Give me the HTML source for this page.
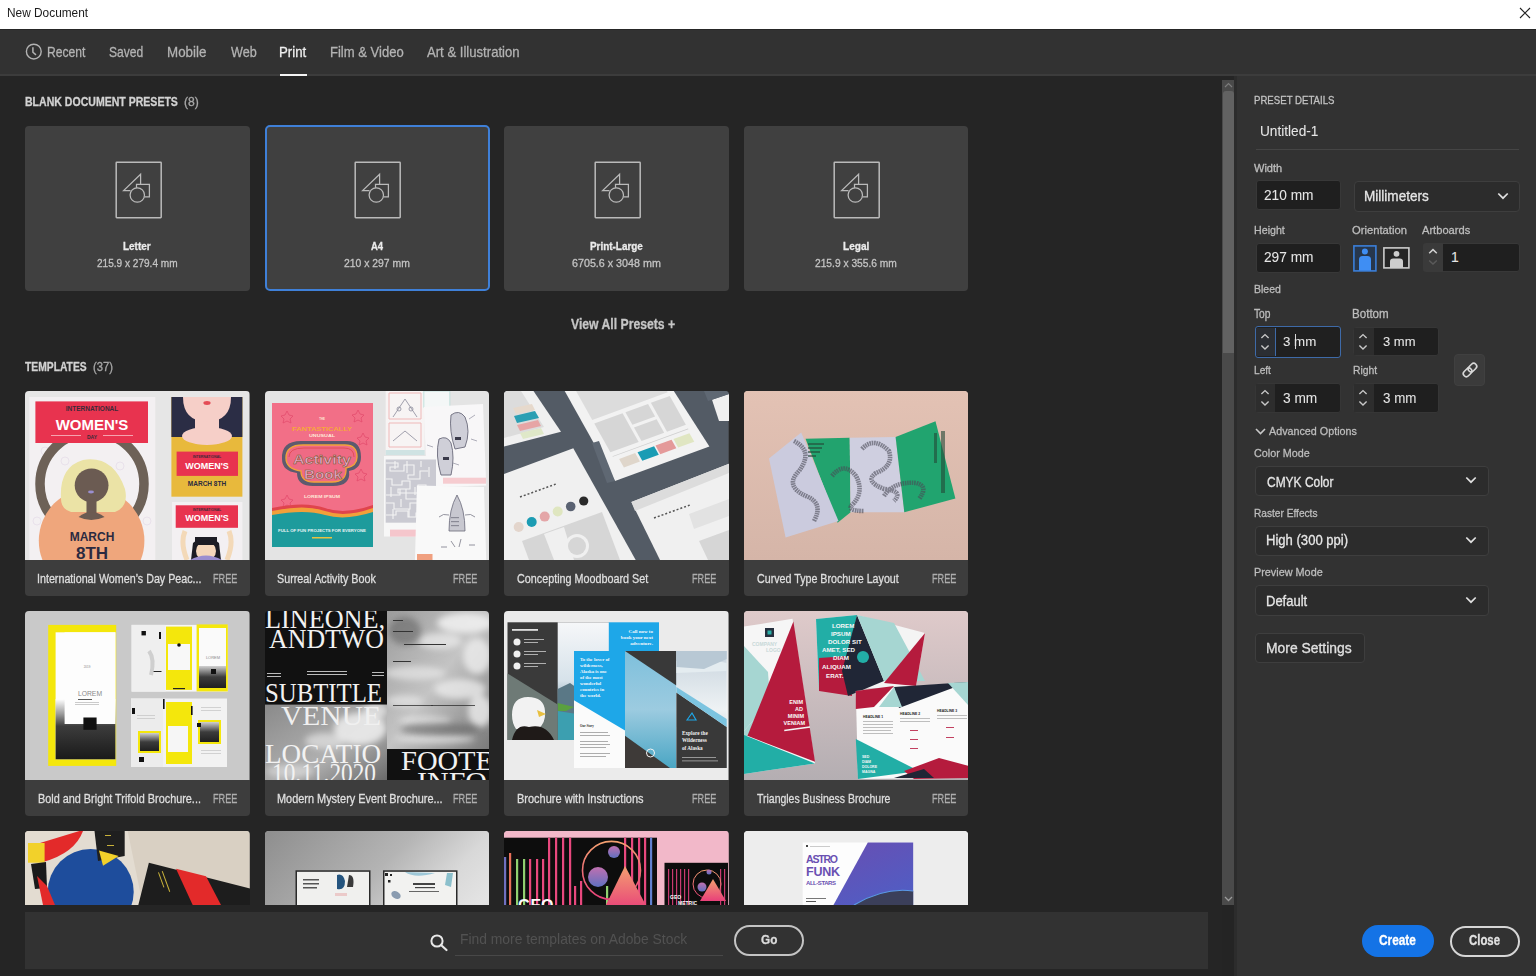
<!DOCTYPE html><html><head><meta charset="utf-8"><style>
*{box-sizing:border-box}
html,body{margin:0;padding:0}
body{width:1536px;height:976px;overflow:hidden;position:relative;background:#252525;font-family:"Liberation Sans",sans-serif}
.a{position:absolute}
.t{position:absolute;white-space:nowrap;line-height:1;transform-origin:0 0;font-family:"Liberation Sans",sans-serif}
.card{position:absolute;background:#404040;border-radius:4px}
.tc{position:absolute;background:#3d3d3d;border-radius:4px;overflow:hidden}
.img{position:absolute;left:0;top:0;width:100%;height:169px;overflow:hidden}
.in{position:absolute;background:#1f1f1f;border:1px solid #383838;border-radius:3px}
.dd{position:absolute;background:#2c2c2c;border:1px solid #3e3e3e;border-radius:4px}
.sp{position:absolute;background:#2e2e2e}
svg{display:block}
</style></head><body>

<div class="a" style="left:0;top:0;width:1536px;height:28.6px;background:#fff"></div>
<svg class="a" style="left:1519px;top:7px" width="12" height="12" viewBox="0 0 12 12"><path d="M1 1L11 11M11 1L1 11" stroke="#222" stroke-width="1.1"/></svg>
<div class="a" style="left:0;top:28.6px;width:1536px;height:46px;background:#323232"></div><div class="a" style="left:0;top:28.6px;width:1536px;height:1px;background:#262626"></div>
<div class="a" style="left:0;top:74.3px;width:1536px;height:2px;background:#3c3c3c"></div>
<div class="a" style="left:280px;top:73.5px;width:27px;height:2.5px;background:#f4f4f4"></div>
<svg class="a" style="left:25px;top:43px" width="18" height="18" viewBox="0 0 18 18"><circle cx="8.8" cy="8.6" r="7.4" fill="none" stroke="#b3b3b3" stroke-width="1.4"/><path d="M7.9 4.3V9.2L11 11.9" fill="none" stroke="#b3b3b3" stroke-width="1.5"/></svg>
<div class="a" style="left:1234px;top:76px;width:302px;height:900px;background:#323232"></div>
<div class="a" style="left:1234px;top:76px;width:3px;height:900px;background:#2c2c2c"></div>
<div class="a" style="left:1222px;top:80px;width:12px;height:825px;background:#4a4a4a"></div>
<div class="a" style="left:1223px;top:91px;width:10.5px;height:262px;background:#626262;border-radius:3px 3px 0 0"></div>
<svg class="a" style="left:1223px;top:81px" width="11" height="8" viewBox="0 0 11 8"><path d="M2 6L5.5 2.5L9 6" fill="none" stroke="#7c7c7c" stroke-width="1.2"/></svg>
<svg class="a" style="left:1223px;top:895px" width="11" height="8" viewBox="0 0 11 8"><path d="M2 2L5.5 5.5L9 2" fill="none" stroke="#9a9a9a" stroke-width="1.3"/></svg>
<div class="card" style="left:25px;top:125.5px;width:224.8px;height:165.5px"></div>
<svg class="a" style="left:114.5px;top:161px" width="48" height="58" viewBox="0 0 48 58"><rect x="1.2" y="1.2" width="45" height="55.5" rx="0.6" fill="none" stroke="#bababa" stroke-width="1.5"/><path d="M25.6 23.6V13.2L8.6 29.6H15.5" fill="none" stroke="#bababa" stroke-width="1.25" stroke-linejoin="miter"/><path d="M21.5 29V23.4H34.4V35.9H29.5" fill="none" stroke="#bababa" stroke-width="1.25"/><circle cx="22.3" cy="34" r="7.2" fill="#404040" stroke="#bababa" stroke-width="1.25"/></svg>
<div class="card" style="left:264.5px;top:125px;width:225.3px;height:166px;border:2.5px solid #3f80d8;border-radius:5px"></div>
<svg class="a" style="left:354.0px;top:161px" width="48" height="58" viewBox="0 0 48 58"><rect x="1.2" y="1.2" width="45" height="55.5" rx="0.6" fill="none" stroke="#bababa" stroke-width="1.5"/><path d="M25.6 23.6V13.2L8.6 29.6H15.5" fill="none" stroke="#bababa" stroke-width="1.25" stroke-linejoin="miter"/><path d="M21.5 29V23.4H34.4V35.9H29.5" fill="none" stroke="#bababa" stroke-width="1.25"/><circle cx="22.3" cy="34" r="7.2" fill="#404040" stroke="#bababa" stroke-width="1.25"/></svg>
<div class="card" style="left:504px;top:125.5px;width:224.8px;height:165.5px"></div>
<svg class="a" style="left:593.5px;top:161px" width="48" height="58" viewBox="0 0 48 58"><rect x="1.2" y="1.2" width="45" height="55.5" rx="0.6" fill="none" stroke="#bababa" stroke-width="1.5"/><path d="M25.6 23.6V13.2L8.6 29.6H15.5" fill="none" stroke="#bababa" stroke-width="1.25" stroke-linejoin="miter"/><path d="M21.5 29V23.4H34.4V35.9H29.5" fill="none" stroke="#bababa" stroke-width="1.25"/><circle cx="22.3" cy="34" r="7.2" fill="#404040" stroke="#bababa" stroke-width="1.25"/></svg>
<div class="card" style="left:743.5px;top:125.5px;width:224.8px;height:165.5px"></div>
<svg class="a" style="left:833.0px;top:161px" width="48" height="58" viewBox="0 0 48 58"><rect x="1.2" y="1.2" width="45" height="55.5" rx="0.6" fill="none" stroke="#bababa" stroke-width="1.5"/><path d="M25.6 23.6V13.2L8.6 29.6H15.5" fill="none" stroke="#bababa" stroke-width="1.25" stroke-linejoin="miter"/><path d="M21.5 29V23.4H34.4V35.9H29.5" fill="none" stroke="#bababa" stroke-width="1.25"/><circle cx="22.3" cy="34" r="7.2" fill="#404040" stroke="#bababa" stroke-width="1.25"/></svg>
<div class="tc" style="left:25px;top:391px;width:224.8px;height:204.5px">
<div class="img"><svg width="224.5" height="169" viewBox="0 0 224.5 169"><rect width="224.5" height="169" fill="#e6e6e6"/>
<rect x="4.3" y="6" width="126" height="163" fill="#f3f0f2"/>
<g fill="none" stroke="#e6dde8" stroke-width="0.8">
<circle cx="20" cy="60" r="4"/><circle cx="40" cy="70" r="4"/><circle cx="110" cy="62" r="4"/><circle cx="95" cy="75" r="4"/>
<circle cx="15" cy="90" r="4"/><circle cx="118" cy="95" r="4"/><circle cx="12" cy="130" r="4"/><circle cx="122" cy="130" r="4"/>
</g>
<circle cx="67" cy="93" r="52" fill="none" stroke="#6d6157" stroke-width="9.5"/>
<circle cx="66.6" cy="149.7" r="52.8" fill="#efa67c"/>
<path d="M36 108 Q34 76 58 69 Q88 64 100 98 Q104 116 90 121 L46 121 Q36 118 36 108Z" fill="#ebe3a6"/>
<circle cx="66.6" cy="94.3" r="16.9" fill="#6b5b52"/>
<rect x="61.5" y="106" width="10" height="16" fill="#6b5b52"/>
<path d="M53.6 126 Q66 116 79.6 126 Q66 132 53.6 126Z" fill="#6b5b52"/>
<ellipse cx="66" cy="101" rx="3" ry="1.4" fill="#9a8fd0"/>
<rect x="10.4" y="10.4" width="112.6" height="41.6" fill="#e8334f"/>
<text x="67" y="20" text-anchor="middle" font-size="6.5" fill="#3b2a38" font-family="Liberation Sans" font-weight="bold">INTERNATIONAL</text>
<text x="67" y="38.5" text-anchor="middle" font-size="15" fill="#ffffff" font-family="Liberation Sans" font-weight="bold">WOMEN'S</text>
<text x="67" y="48" text-anchor="middle" font-size="5" fill="#3b2a38" font-family="Liberation Sans" font-weight="bold">DAY</text>
<path d="M26 44.5H56M78 44.5H108" stroke="#f7c0c8" stroke-width="0.8"/>
<text x="67" y="150" text-anchor="middle" font-size="12" fill="#2b2a40" font-family="Liberation Sans" font-weight="bold">MARCH</text>
<text x="67" y="168" text-anchor="middle" font-size="17" fill="#2b2a40" font-family="Liberation Sans" font-weight="bold">8TH</text>
<rect x="146.4" y="6" width="71" height="99.7" fill="#e8b93c"/>
<rect x="146.4" y="6" width="71" height="40" fill="#2b2d45"/>
<ellipse cx="182" cy="45" rx="25" ry="9" fill="#f6cfc8"/><path d="M170 20 H194 V42 H170Z" fill="#f6cfc8"/><path d="M158 6 H206 Q206 30 182 31 Q158 30 158 6Z" fill="#f6cfc8"/>
<rect x="146.4" y="0" width="71" height="6" fill="#e6e6e6"/>
<ellipse cx="182" cy="12" rx="3.6" ry="1.9" fill="#e44b55"/>
<rect x="151.6" y="60.6" width="61.4" height="24.3" fill="#e8334f"/>
<text x="182" y="66.5" text-anchor="middle" font-size="3.5" fill="#3b2a38" font-family="Liberation Sans" font-weight="bold">INTERNATIONAL</text>
<text x="182" y="77.5" text-anchor="middle" font-size="9" fill="#ffffff" font-family="Liberation Sans" font-weight="bold">WOMEN'S</text>
<text x="182" y="94.5" text-anchor="middle" font-size="6.5" fill="#2b2a40" font-family="Liberation Sans" font-weight="bold">MARCH 8TH</text>
<rect x="147" y="111" width="70.4" height="58" fill="#f3f0f2"/>
<rect x="150.7" y="114.3" width="62.3" height="22.5" fill="#e8334f"/>
<text x="182" y="119.5" text-anchor="middle" font-size="3.5" fill="#3b2a38" font-family="Liberation Sans" font-weight="bold">INTERNATIONAL</text>
<text x="182" y="130" text-anchor="middle" font-size="9" fill="#ffffff" font-family="Liberation Sans" font-weight="bold">WOMEN'S</text>
<path d="M160 140 Q155 152 162 169M204 140 Q209 152 202 169" fill="none" stroke="#f3d9b8" stroke-width="5"/>
<path d="M166 169 L168 152 Q181 140 194 152 L196 169Z" fill="#1c1c24"/>
<ellipse cx="181" cy="160" rx="10" ry="10" fill="#f5d7bb"/>
<rect x="170" y="146" width="22" height="8" fill="#1c1c24"/>
<path d="M165 169 Q181 160 197 169Z" fill="#9b8ed0"/>
</svg></div>
</div>
<div class="tc" style="left:264.5px;top:391px;width:224.8px;height:204.5px">
<div class="img"><svg width="224.5" height="169" viewBox="0 0 224.5 169"><rect width="224.5" height="169" fill="#e4e4e4"/>
<rect x="7" y="12" width="101" height="144" fill="#f26f87"/>
<g fill="none" stroke="#e34c6d" stroke-width="0.8">
<path d="M22 20l2 4 4 1-3 3 1 4-4-2-4 2 1-4-3-3 4-1z"/><path d="M93 19l2 4 4 1-3 3 1 4-4-2-4 2 1-4-3-3 4-1z"/>
<path d="M98 42l2 4 4 1-3 3 1 4-4-2-4 2 1-4-3-3 4-1z"/><path d="M22 104l2 4 4 1-3 3 1 4-4-2-4 2 1-4-3-3 4-1z"/>
<path d="M96 78l2 4 4 1-3 3 1 4-4-2-4 2 1-4-3-3 4-1z"/>
</g>
<text x="57" y="29" text-anchor="middle" font-size="2.8" fill="#ffe9d8" font-family="Liberation Sans" font-weight="bold">THE</text>
<text x="57" y="40" text-anchor="middle" font-size="5.5" fill="#f7a83a" textLength="60" lengthAdjust="spacingAndGlyphs" font-family="Liberation Sans" font-weight="bold">FANTASTICALLY</text>
<text x="57" y="45.5" text-anchor="middle" font-size="2.8" fill="#ffe9d8" textLength="26" lengthAdjust="spacingAndGlyphs" font-family="Liberation Sans" font-weight="bold">UNUSUAL</text>
<path d="M17 68 Q16 50 36 50 L82 50 Q96 50 96 66 Q96 78 84 80 Q86 95 68 95 L48 95 Q32 95 32 82 Q17 80 17 68Z" fill="#5d5a6e"/>
<path d="M21 67 Q21 54 38 54 L80 54 Q92 54 92 66 Q92 75 81 77 Q82 91 67 91 L49 91 Q36 91 36 80 Q21 78 21 67Z" fill="#ef6a84" stroke="#f2a23a" stroke-width="1.4"/>
<path d="M24 66 Q24 57 39 57 L79 57 Q89 57 89 66" fill="none" stroke="#e04a50" stroke-width="0.9"/>
<text x="57" y="73" text-anchor="middle" font-size="13" fill="#e9a6cf" stroke="#7a5a2a" stroke-width="0.5" textLength="58" lengthAdjust="spacingAndGlyphs" font-family="Liberation Sans" font-weight="bold">Activity</text>
<text x="58" y="88" text-anchor="middle" font-size="13" fill="#e9a6cf" stroke="#7a5a2a" stroke-width="0.5" textLength="38" lengthAdjust="spacingAndGlyphs" font-family="Liberation Sans" font-weight="bold">Book</text>
<text x="57" y="107" text-anchor="middle" font-size="3.4" fill="#ffe9d8" textLength="36" lengthAdjust="spacingAndGlyphs" font-family="Liberation Sans" font-weight="bold">LOREM IPSUM</text>
<path d="M7 117 Q40 110 60 117 T108 114 V156 H7Z" fill="#e0444c"/>
<path d="M7 120 Q40 113 60 120 T108 117 V156 H7Z" fill="#f2a03a"/>
<path d="M7 124 Q40 118 60 124 T108 121 V156 H7Z" fill="#1d9b9c"/>
<text x="57" y="141" text-anchor="middle" font-size="2.8" fill="#e8f4f4" textLength="88" lengthAdjust="spacingAndGlyphs" font-family="Liberation Sans" font-weight="bold">FULL OF FUN PROJECTS FOR EVERYONE</text>
<rect x="47" y="146" width="20" height="1.5" fill="#e9c240"/>
<path d="M120.7 0H159.7V64H120.7Z" fill="#f7f4f4"/>
<path d="M120.7 59H159.7V64H120.7Z" fill="#cfe3e3"/>
<g fill="none" stroke="#efb8b8" stroke-width="1"><path d="M124 2H156V28H124Z M124 32H156V56H124Z"/></g>
<g fill="none" stroke="#8a8a9a" stroke-width="0.8"><path d="M128 26 L140 8 L152 26 M128 50 L140 40 L152 50"/><circle cx="134" cy="18" r="2"/><circle cx="146" cy="18" r="2"/></g>
<path d="M158.8 0H184.8V16.5H158.8Z" fill="#f4f7f7" stroke="#b8dcd8" stroke-width="0.8"/>
<path d="M158.8 16 L218 13 L221.2 94.5 L162 96Z" fill="#f8f7f8"/>
<rect x="178" y="86.7" width="43" height="6" fill="#f6ccd0"/>
<g fill="#cfcfd8" stroke="#6a6a7a" stroke-width="0.9">
<path d="M186 24 Q194 18 200 26 Q206 40 200 56 L190 58 Q184 40 186 24Z"/>
<path d="M174 48 Q182 44 186 52 Q190 66 186 84 L176 84 Q170 64 174 48Z"/>
</g>
<g fill="#3a3a4a"><rect x="190" y="46" width="6" height="3"/><rect x="178" y="66" width="6" height="3"/></g>
<g fill="none" stroke="#9a9aa8" stroke-width="0.8"><path d="M204 28 l6 -4 M206 48 l6 2 M168 56 l-6 -2 M188 72 l6 2"/></g>
<path d="M119 65 H171.8 V145.6 H119Z" fill="#f7f7f7"/>
<rect x="120.7" y="68.5" width="50.3" height="63.2" fill="#cacad2"/>
<g stroke="#f4f4f4" stroke-width="1.1" fill="none">
<path d="M121 72h12v4h-8v4h14v-6h10v10h-6v4h12v-8h8M121 88h6v6h10v-4h8v8h-12v4h20v-8h8v6M121 104h14v-6h6v10h12v-6h10v10M121 112h8v6h16v-6h8v8h14M121 124h10v-4h12v6h8v-4h10v6h8"/>
<path d="M130 70v8M142 70v12M156 70v6M164 76v10M126 96v10M150 96v8M136 108v8M160 108v12M144 118v8M128 118v10"/>
</g>
<rect x="125" y="138.6" width="32" height="7" fill="#f5c6cc"/>
<path d="M151.9 94.5 L219 96 L221.2 169 L150 169Z" fill="#f9f9f9"/>
<rect x="152" y="163" width="15.5" height="6" fill="#f0a080"/>
<g fill="#c8c8d0" stroke="#6a6a7a" stroke-width="0.8">
<path d="M192 104 Q184 118 184 140 L200 140 Q200 118 192 104Z"/>
</g>
<g fill="none" stroke="#7a7a88" stroke-width="0.8"><path d="M184 124 q-6 -2 -10 2 M200 124 q6 -2 10 2"/><path d="M186 150 l4 6 M196 148 l-2 8 M176 156 h6 M204 154 h6"/></g>
<g fill="#8a8a96"><rect x="186" y="126" width="8" height="1.2"/><rect x="186" y="130" width="8" height="1.2"/><rect x="186" y="134" width="8" height="1.2"/></g>
</svg></div>
</div>
<div class="tc" style="left:504px;top:391px;width:224.8px;height:204.5px">
<div class="img"><svg width="224.5" height="169" viewBox="0 0 224.5 169"><rect width="224.5" height="169" fill="#535b65"/>
<polygon points="0,0 29.5,0 57,40.7 0,55.5" fill="#f0f0f0"/>
<polygon points="0,0 17,0 40,36 0,47" fill="#dcdcdc"/>
<polygon points="9,17 28,13 31,19 12,23" fill="#e6d9cc"/>
<polygon points="10,25 31,20 35,27 13,32" fill="#2a9fb3"/>
<polygon points="13,34 34,29 37,35 16,40" fill="#e6a5a5"/>
<polygon points="16,42 37,37 40,43 19,48" fill="#dfe8c8"/>
<polygon points="60.7,0 169.8,0 205.4,55.5 111,90" fill="#f2f2f2"/>
<polygon points="95,50 111,90 103,92 88,52" fill="#5f6873"/>
<g transform="matrix(0.944,-0.345,-0.503,-0.9,111,90)">
<rect x="10" y="64" width="80" height="40" fill="#dcdcdc"/>
<rect x="10" y="28" width="30" height="32" fill="#d6d6d6"/>
<rect x="43" y="46" width="24" height="14" fill="#d6d6d6"/>
<rect x="43" y="28" width="24" height="15" fill="#d6d6d6"/>
<rect x="70" y="28" width="20" height="32" fill="#d6d6d6"/>
<rect x="10" y="23" width="80" height="0.8" fill="#cfcfcf"/>
<rect x="14.5" y="9.5" width="17" height="9.5" fill="#dfd6cb"/>
<rect x="34" y="9.5" width="17.5" height="9.5" fill="#1a9cb4"/>
<rect x="53" y="9.5" width="17" height="9.5" fill="#e49a9a"/>
<rect x="72" y="9.5" width="17" height="9.5" fill="#e0e6c2"/>
</g>
<polygon points="0,83 69.3,57.2 131.7,169 0,169" fill="#f0f0f0"/>
<circle cx="14.7" cy="136" r="5" fill="#e3d5cc"/>
<circle cx="27.7" cy="131" r="5" fill="#1c9cb3"/>
<circle cx="40.7" cy="125.6" r="5" fill="#e4a6a8"/>
<circle cx="53.7" cy="120.5" r="5" fill="#dfe6c0"/>
<circle cx="66.7" cy="115.5" r="4.8" fill="#5a6272"/>
<circle cx="79.7" cy="110" r="4.6" fill="#2a2a2a"/>
<path d="M16 106 L52 93" stroke="#555" stroke-width="1.5" stroke-dasharray="2 2"/>
<polygon points="18,150 98,121 116,169 25,169" fill="#d6d6d6"/>
<polygon points="40,143 60,136 70,169 50,169" fill="#f0f0f0"/>
<circle cx="73" cy="155" r="12" fill="#f0f0f0"/>
<circle cx="73" cy="155" r="9" fill="#d6d6d6"/>
<polygon points="127.4,111 225,72.8 225,169 156,169" fill="#f0f0f0"/>
<polygon points="127.4,111 225,72.8 225,82 131,120" fill="#dcdcdc"/>
<path d="M150 127 L186 114" stroke="#555" stroke-width="1.5" stroke-dasharray="2 2"/>
<polygon points="185,123 225,108 225,125 190,138" fill="#e2e2e2"/>
<polygon points="195,150 225,139 225,169 204,169" fill="#d6d6d6"/>
<polygon points="208,8.7 225,3 225,30 215,30" fill="#f0f0f0"/>
<polygon points="200,0 225,0 225,3 208,8.7 204,10" fill="#5f6873"/>
</svg></div>
</div>
<div class="tc" style="left:743.5px;top:391px;width:224.8px;height:204.5px">
<div class="img"><svg width="224.5" height="169" viewBox="0 0 224.5 169"><rect width="224.5" height="169" fill="#dfbeb0"/>
<defs><linearGradient id="cg" x1="0" y1="0" x2="0" y2="1"><stop offset="0" stop-color="#e3c2b4"/><stop offset="1" stop-color="#d5b5a8"/></linearGradient></defs>
<rect width="224.5" height="169" fill="url(#cg)"/>

<polygon points="61.5,47.7 105.7,46.8 106.6,121.3 93.6,131.7" fill="#22a36e"/>
<polygon points="25,67.6 57.2,41.6 94.5,130 41.6,146.4" fill="#cbcbde"/>

<polygon points="105.7,46.8 151.6,46 160.3,121.3 106.6,121.3" fill="#cfcfe0"/>
<polygon points="151.6,46 191.5,30.3 211.4,107.4 160.3,121.3" fill="#21a46f"/>
<g fill="none" stroke="#4a4a56" stroke-width="4.6" stroke-dasharray="1.6 0.7" opacity="0.6">
<path d="M50 50 Q70 60 55 80 Q40 95 62 105 Q80 112 70 130"/>
<path d="M88 85 Q100 70 112 85 Q120 100 110 112 Q100 120 120 120"/>
<path d="M118 58 Q130 45 145 60 Q150 75 132 82 Q120 90 140 98 Q160 100 150 110"/>
<path d="M140 105 Q150 90 172 92 Q185 95 175 108"/>
</g>
<g fill="#244a38" opacity="0.6"><rect x="64" y="52" width="16" height="2"/><rect x="64" y="56" width="14" height="2"/><rect x="64" y="60" width="12" height="2"/><rect x="64" y="64" width="8" height="2"/>
<rect x="197" y="40" width="4" height="62"/><rect x="190" y="42" width="3" height="30"/></g>
</svg></div>
</div>
<div class="tc" style="left:25px;top:611px;width:224.8px;height:204.5px">
<div class="img"><svg width="224.5" height="169" viewBox="0 0 224.5 169"><rect width="224.5" height="169" fill="#c9c9c9"/>
<defs>
<linearGradient id="fg" x1="0" y1="0" x2="0" y2="1"><stop offset="0" stop-color="#ffffff"/><stop offset="0.25" stop-color="#9a9a9a"/><stop offset="0.45" stop-color="#3c3c3c"/><stop offset="1" stop-color="#1a1a1a"/></linearGradient>
<linearGradient id="fg2" x1="0" y1="0" x2="0" y2="1"><stop offset="0" stop-color="#d0d0d0"/><stop offset="0.5" stop-color="#3c3c3c"/><stop offset="1" stop-color="#202020"/></linearGradient>
</defs>
<rect x="23.2" y="13.9" width="68" height="141" fill="#f4e70c"/>
<rect x="30.6" y="21.3" width="59.8" height="127" fill="#fdfdfd"/>
<rect x="30.6" y="88" width="59.8" height="60.3" fill="url(#fg)"/>
<rect x="39.6" y="21.3" width="50.8" height="91.7" fill="#fdfdfd"/>
<rect x="58.4" y="106.5" width="13.2" height="12.3" fill="#111"/>
<text x="65" y="85" text-anchor="middle" font-size="8" fill="#8a8a8a" font-family="Liberation Sans" textLength="24" lengthAdjust="spacingAndGlyphs">LOREM</text>
<rect x="53" y="88" width="14" height="0.9" fill="#444"/>
<rect x="50" y="91" width="24" height="0.6" fill="#aaa"/><rect x="50" y="93" width="24" height="0.6" fill="#aaa"/>
<text x="62" y="57" text-anchor="middle" font-size="3" fill="#888" font-family="Liberation Sans">2019</text>
<rect x="106.6" y="13.9" width="96.2" height="66.7" fill="#f6f6f6"/>
<rect x="106.6" y="13.9" width="34" height="66.7" fill="#efefef"/>
<rect x="141" y="15.6" width="26" height="63.3" fill="#f4e70c"/>
<rect x="143" y="33" width="22" height="26" fill="#f8f8f8"/>
<circle cx="154" cy="34" r="1.8" fill="#111"/>
<rect x="116.5" y="20" width="4.4" height="4.4" fill="#111"/>
<rect x="134" y="21" width="2" height="7" fill="#111"/>
<rect x="127.5" y="60" width="9" height="1" fill="#222"/>
<rect x="148" y="77" width="12" height="1.2" fill="#222"/>
<path d="M124 40 q6 8 2 24" stroke="#cfcfcf" stroke-width="4" fill="none"/>
<rect x="171.6" y="13.4" width="31.2" height="67" fill="#f4e70c"/>
<rect x="174" y="17" width="27" height="60" fill="#fafafa"/>
<rect x="174" y="55" width="27" height="22" fill="url(#fg2)"/>
<rect x="186" y="58" width="5" height="5" fill="#111"/>
<text x="188" y="48" text-anchor="middle" font-size="4" fill="#8a8a8a" font-family="Liberation Sans">LOREM</text>
<rect x="106" y="87.5" width="96" height="68.5" fill="#f2f2f2"/>
<rect x="106" y="87.5" width="32" height="68.5" fill="#ececec"/>
<rect x="141" y="91" width="26" height="62" fill="#f4e70c"/>
<rect x="143" y="115" width="20" height="26" fill="#f6f6f6"/>
<rect x="113" y="120" width="23" height="22" fill="#f4e70c"/>
<rect x="115" y="122" width="19" height="18" fill="url(#fg2)"/>
<rect x="173" y="109" width="23" height="24" fill="#f4e70c"/>
<rect x="175" y="111" width="19" height="20" fill="url(#fg2)"/>
<rect x="107" y="97" width="3" height="6" fill="#111"/>
<rect x="138" y="88" width="1.6" height="10" fill="#111"/>
<rect x="114" y="146" width="5" height="5" fill="#111"/>
<rect x="172" y="112" width="4" height="4" fill="#111"/>
<rect x="166" y="95" width="1.6" height="9" fill="#111"/>
<g fill="#c8c8c8"><rect x="112" y="104" width="18" height="0.8"/><rect x="112" y="107" width="18" height="0.8"/><rect x="176" y="139" width="20" height="0.8"/><rect x="176" y="142" width="20" height="0.8"/><rect x="176" y="96" width="20" height="0.8"/><rect x="176" y="99" width="20" height="0.8"/></g>
</svg></div>
</div>
<div class="tc" style="left:264.5px;top:611px;width:224.8px;height:204.5px">
<div class="img"><svg width="224.5" height="169" viewBox="0 0 224.5 169"><rect width="224.5" height="169" fill="#111111"/>
<defs>
<linearGradient id="cl1" x1="0" y1="0" x2="1" y2="1"><stop offset="0" stop-color="#9c9c9c"/><stop offset="0.5" stop-color="#c4c4c4"/><stop offset="1" stop-color="#7a7a7a"/></linearGradient>
<linearGradient id="cl2" x1="0" y1="0" x2="1" y2="1"><stop offset="0" stop-color="#8a8a8a"/><stop offset="0.6" stop-color="#b0b0b0"/><stop offset="1" stop-color="#6a6a6a"/></linearGradient>
</defs>
<rect x="0" y="0" width="122" height="93.6" fill="#111111"/>
<filter id="bl" x="-50%" y="-50%" width="200%" height="200%"><feGaussianBlur stdDeviation="3"/></filter><clipPath id="mcr"><rect x="122" y="0" width="102.5" height="138"/></clipPath><clipPath id="mcl"><rect x="0" y="93.6" width="122" height="75.4"/></clipPath>
<rect x="122" y="0" width="102.5" height="138" fill="url(#cl1)"/>
<g clip-path="url(#mcr)"><g filter="url(#bl)" fill="#eeeeee">
<ellipse cx="200" cy="12" rx="28" ry="10" opacity="0.9"/>
<ellipse cx="175" cy="30" rx="22" ry="8" opacity="0.7"/>
<ellipse cx="212" cy="45" rx="14" ry="18" opacity="0.8"/>
<ellipse cx="150" cy="62" rx="30" ry="7" opacity="0.6"/>
<ellipse cx="195" cy="78" rx="26" ry="10" opacity="0.75"/>
<ellipse cx="140" cy="90" rx="18" ry="6" opacity="0.6"/>
<ellipse cx="215" cy="100" rx="12" ry="16" opacity="0.8"/>
<ellipse cx="160" cy="110" rx="26" ry="5" opacity="0.6"/>
<ellipse cx="170" cy="128" rx="40" ry="4" opacity="0.7"/>
</g>
<g filter="url(#bl)" fill="#5a5a5a" opacity="0.5">
<ellipse cx="140" cy="20" rx="16" ry="14"/>
<ellipse cx="175" cy="118" rx="40" ry="6"/>
</g></g>
<rect x="0" y="93.6" width="122" height="75.4" fill="url(#cl2)"/>
<g clip-path="url(#mcl)"><g filter="url(#bl)" fill="#eeeeee">
<ellipse cx="95" cy="118" rx="26" ry="16" opacity="0.85"/>
<ellipse cx="60" cy="130" rx="20" ry="8" opacity="0.6"/>
<ellipse cx="110" cy="100" rx="12" ry="8" opacity="0.7"/>
<ellipse cx="25" cy="160" rx="24" ry="7" opacity="0.5"/>
</g></g>
<rect x="122" y="138" width="102.5" height="31" fill="#111111"/>
<g font-family="Liberation Serif" fill="#f2f2f2" lengthAdjust="spacingAndGlyphs">
<text x="0" y="16.5" font-size="27" textLength="120" lengthAdjust="spacingAndGlyphs">LINEONE,</text>
<text x="4" y="37.3" font-size="27" textLength="115" lengthAdjust="spacingAndGlyphs">ANDTWO</text>
<text x="0" y="91" font-size="27" textLength="117" lengthAdjust="spacingAndGlyphs">SUBTITLE</text>
<text x="16" y="114.4" font-size="27" textLength="100" lengthAdjust="spacingAndGlyphs" fill="#f0f0f0">VENUE</text>
<text x="0" y="151.6" font-size="27" textLength="116" lengthAdjust="spacingAndGlyphs">LOCATIO</text>
<text x="7" y="171" font-size="27" textLength="104" lengthAdjust="spacingAndGlyphs">10.11.2020</text>
<text x="136" y="158.6" font-size="27" textLength="92" lengthAdjust="spacingAndGlyphs">FOOTE</text>
<text x="152" y="180" font-size="27" textLength="70" lengthAdjust="spacingAndGlyphs">INFO</text>
</g>
<g fill="#bbb"><rect x="2" y="62" width="14" height="1"/><rect x="2" y="65" width="14" height="1"/><rect x="42" y="60" width="40" height="1"/><rect x="42" y="63" width="40" height="1"/><rect x="107" y="61" width="12" height="1"/><rect x="107" y="64" width="12" height="1"/></g>
<g fill="#333"><rect x="128" y="9" width="10" height="1"/><rect x="128" y="20" width="20" height="1"/><rect x="139" y="33" width="42" height="1"/><rect x="128" y="50" width="18" height="1"/><rect x="128" y="94" width="40" height="0.8"/><rect x="166" y="94" width="44" height="0.8"/></g>
</svg></div>
</div>
<div class="tc" style="left:504px;top:611px;width:224.8px;height:204.5px">
<div class="img"><svg width="224.5" height="169" viewBox="0 0 224.5 169"><rect width="224.5" height="169" fill="#ebebeb"/>
<defs>
<linearGradient id="sky" x1="0" y1="0" x2="0" y2="1"><stop offset="0" stop-color="#f6f7f9"/><stop offset="0.5" stop-color="#d6e2ea"/><stop offset="0.7" stop-color="#8aa4b2"/><stop offset="1" stop-color="#3aa0b2"/></linearGradient>
<linearGradient id="ice" x1="0" y1="0" x2="0" y2="1"><stop offset="0" stop-color="#7ec0dc"/><stop offset="0.5" stop-color="#9ccbe0"/><stop offset="1" stop-color="#4aa6c4"/></linearGradient>
<linearGradient id="gl" x1="0" y1="0" x2="0" y2="1"><stop offset="0" stop-color="#c8d4de"/><stop offset="0.5" stop-color="#eef2f4"/><stop offset="1" stop-color="#a8b8c2"/></linearGradient>
</defs>
<rect x="3.5" y="11.3" width="101.5" height="117.7" fill="#3a3a3a"/>
<rect x="53.7" y="11.3" width="51.3" height="117.7" fill="url(#sky)"/>
<polygon points="53.7,78 66,72 80,82 105,88 105,105 53.7,105" fill="#5a7886"/>
<polygon points="53.7,100 105,108 105,129 53.7,129" fill="#3c9fb0"/><polygon points="53.7,92 70,96 62,100 53.7,100" fill="#5aa040"/>
<polygon points="3.5,62.4 53.7,93.6 53.7,129 3.5,129" fill="#6e7a76"/>
<path d="M8 104 Q8 86 24 86 Q40 86 41 100 Q42 112 34 118 L12 118 Q8 112 8 104Z" fill="#f2f2f2"/>
<path d="M8 129 Q12 112 25 116 Q42 112 50 129Z" fill="#1f1a18"/>
<path d="M33 99 L42 103 L35 106Z" fill="#e8c040"/>
<circle cx="13" cy="31" r="3.5" fill="#f0f0f0"/><circle cx="13" cy="43" r="3.5" fill="#f0f0f0"/><circle cx="13" cy="55" r="3.5" fill="#f0f0f0"/>
<rect x="8" y="18" width="26" height="1.8" fill="#e0e0e0"/>
<g fill="#bdbdbd"><rect x="20" y="28" width="20" height="0.9"/><rect x="20" y="31" width="14" height="0.9"/><rect x="20" y="40" width="22" height="0.9"/><rect x="20" y="43" width="14" height="0.9"/><rect x="20" y="52" width="22" height="0.9"/><rect x="20" y="55" width="14" height="0.9"/></g>
<rect x="104.8" y="11.3" width="50.2" height="40" fill="#1ea7e8"/>
<g fill="#f4f8fc" font-family="Liberation Serif" font-weight="bold" font-size="5" text-anchor="end"><text x="149" y="22">Call now to</text><text x="149" y="28">book your next</text><text x="149" y="34">adventure.</text></g>
<rect x="70" y="40" width="152.7" height="117" fill="#fbfbfb"/>
<polygon points="70,40 121,40 121,119.6 70,89.2" fill="#1ea7e8"/>
<g fill="#f4f8fc" font-family="Liberation Serif" font-weight="bold" font-size="4.8"><text x="76" y="50">To the lover of</text><text x="76" y="56">wilderness,</text><text x="76" y="62">Alaska is one</text><text x="76" y="68">of the most</text><text x="76" y="74">wonderful</text><text x="76" y="80">countries in</text><text x="76" y="86">the world.</text></g>
<text x="76" y="116" font-size="3.2" fill="#333" font-family="Liberation Serif" font-weight="bold">Our Story</text>
<g fill="#9a9a9a"><rect x="76" y="121" width="28" height="0.8"/><rect x="76" y="124" width="30" height="0.8"/><rect x="76" y="130" width="28" height="0.8"/><rect x="76" y="133" width="30" height="0.8"/><rect x="76" y="136" width="26" height="0.8"/><rect x="76" y="142" width="30" height="0.8"/><rect x="76" y="145" width="26" height="0.8"/></g>
<rect x="121" y="40" width="51.4" height="117" fill="url(#ice)"/>
<polygon points="121,40 172.4,40 172.4,74.5" fill="#393939"/>
<polygon points="121,124.8 121,157 166,157" fill="#3e3a38"/>
<circle cx="146.5" cy="142" r="4" fill="none" stroke="#f4f4f4" stroke-width="1"/>
<rect x="172.4" y="40" width="50.3" height="117" fill="url(#gl)"/>
<polygon points="172.4,50 190,45 222.7,52 222.7,60 172.4,62" fill="#e4ecf0"/>
<polygon points="172.4,40 222.7,40 222.7,48 200,58 172.4,56" fill="#b8c8d4"/>
<polygon points="172.4,81.5 222.7,116 222.7,157 172.4,157" fill="#393939"/>
<polygon points="172.4,76 222.7,108 222.7,116 172.4,81.5" fill="#7cc4e0"/>
<path d="M183 109 L188 102 L192 109Z" fill="none" stroke="#1ea7e8" stroke-width="1.2"/>
<g fill="#f2f2f2" font-family="Liberation Serif" font-weight="bold" font-size="5.2"><text x="178" y="124">Explore the</text><text x="178" y="131">Wilderness</text><text x="178" y="138.5">of Alaska</text></g>
<g fill="#b0b0b0"><rect x="178" y="146" width="34" height="0.8"/><rect x="178" y="149.5" width="36" height="0.8"/></g>
</svg></div>
</div>
<div class="tc" style="left:743.5px;top:611px;width:224.8px;height:204.5px">
<div class="img"><svg width="224.5" height="169" viewBox="0 0 224.5 169"><rect width="224.5" height="169" fill="#d8c6c6"/>
<defs><linearGradient id="tg" x1="0" y1="0" x2="0" y2="1"><stop offset="0" stop-color="#dfcaca"/><stop offset="1" stop-color="#b4aeb2"/></linearGradient></defs>
<rect width="224.5" height="169" fill="url(#tg)"/>
<polygon points="0,15.6 48.5,7.8 71,152.5 0,163" fill="#f6f6f6"/>
<polygon points="0,35 24,61 26,90 0,120" fill="#a6d6d2"/>
<polygon points="0,120 26,90 40,125 0,125" fill="#a6d6d2"/>
<polygon points="49.4,10.4 71,150.8 3.5,124.8" fill="#b51b3d"/>
<polygon points="0,124 71,152.5 0,163" fill="#22aea6"/>
<rect x="21" y="17" width="9" height="9" fill="#26303e"/><rect x="23.5" y="19.5" width="4" height="4" fill="#2ab0a8"/>
<g fill="#c8d8d8" font-family="Liberation Sans" font-weight="bold" font-size="5"><text x="8" y="35">COMPANY</text><text x="22" y="41">LOGO</text></g>
<g fill="#fbfbfb" font-family="Liberation Sans" font-weight="bold" font-size="5.5" text-anchor="end"><text x="59" y="93">ENIM</text><text x="59" y="100">AD</text><text x="60" y="107">MINIM</text><text x="61" y="114">VENIAM</text></g>
<rect x="40" y="117" width="26" height="1.5" fill="#f4f4f4" transform="rotate(-8 53 117)"/>
<polygon points="72,8 113,4 181,22 172,75 75,80" fill="#f4f4f4"/>
<polygon points="72,8 113,4 104,45 75,80" fill="#22aea6"/>
<polygon points="75,47 104,45 108,85 75,80" fill="#b51b3d"/>
<polygon points="113,4 140,70 104,85 98,60" fill="#202636"/>
<polygon points="113,4 150,12 181,70 140,70" fill="#a6d6d2"/>
<polygon points="181,22 172,75 140,72" fill="#b51b3d"/>
<g fill="#f8f8f8" font-family="Liberation Sans" font-weight="bold" font-size="6.2"><text x="88" y="17">LOREM</text><text x="87" y="25">IPSUM</text><text x="84" y="33">DOLOR SIT</text><text x="78" y="41">AMET, SED</text><text x="89" y="49">DIAM</text><text x="78" y="58">ALIQUAM</text><text x="82" y="67">ERAT.</text></g>
<circle cx="119" cy="46" r="6" fill="#22aea6"/>
<polygon points="111.8,80 225,71 225,167 114,168" fill="#fafafa"/>
<polygon points="111.8,80 150,75 130,96 111.8,98" fill="#b51b3d"/>
<polygon points="150,76 225,71 155,97" fill="#202636"/>
<polygon points="135,96 150,76 158,96" fill="#a6d6d2"/>
<polygon points="204,72 225,71 225,95" fill="#a6d6d2"/>
<polygon points="111.8,128 175,160 114,168" fill="#22aea6"/>
<polygon points="160,160 195,147 225,155 225,167 170,168" fill="#b51b3d"/>
<polygon points="150,167 180,158 190,167" fill="#202636"/>
<g fill="#222" font-family="Liberation Sans" font-weight="bold" font-size="3.4"><text x="119" y="107">HEADLINE 1</text><text x="156" y="104">HEADLINE 2</text><text x="193" y="101">HEADLINE 3</text></g>
<g fill="#b0b0b0"><rect x="119" y="110" width="30" height="0.8"/><rect x="119" y="113" width="30" height="0.8"/><rect x="119" y="116" width="30" height="0.8"/><rect x="119" y="119" width="28" height="0.8"/><rect x="119" y="122" width="30" height="0.8"/><rect x="156" y="107" width="30" height="0.8"/><rect x="156" y="110" width="30" height="0.8"/><rect x="193" y="104" width="30" height="0.8"/><rect x="193" y="107" width="30" height="0.8"/></g>
<g fill="#c24060"><rect x="166" y="119" width="8" height="1"/><rect x="166" y="128" width="8" height="1"/><rect x="166" y="137" width="8" height="1"/><rect x="202" y="116" width="8" height="1"/><rect x="202" y="126" width="8" height="1"/></g>
<g fill="#f8f8f8" font-family="Liberation Sans" font-weight="bold" font-size="3.5"><text x="118" y="147">SED</text><text x="118" y="152">DIAM</text><text x="118" y="157">DOLORE</text><text x="118" y="162">MAGNA</text></g>
</svg></div>
</div>
<div class="tc" style="left:25px;top:831px;width:224.8px;height:120px">
<div class="img"><svg width="224.5" height="169" viewBox="0 0 224.5 169"><rect width="224.5" height="169" fill="#d9d0c3"/>
<rect width="224.5" height="169" fill="#d9d0c3"/>
<polygon points="0,0 102.7,0 117.8,74 0,74" fill="#e3dcd1"/>
<path d="M15 12 L54.4 0 L58 0 Q50 22 18 31Z" fill="#e32a2a"/>
<rect x="3" y="12" width="16.6" height="19.7" fill="#f2d12a"/>
<circle cx="65.7" cy="61" r="43" fill="#1e4d9c"/>
<polygon points="6,33 21,31 22,57 10,58" fill="#1b1b1b"/>
<polygon points="12,45 22,55 30,74 18,74" fill="#e32a2a"/>
<polygon points="69.5,0 99.7,0 99.7,25 73,30" fill="#1f1f1f"/>
<polygon points="74,19.6 93.7,25 78,34.7" fill="#f2d12a"/>
<g fill="#c9b23a"><rect x="80" y="4" width="6" height="1"/><rect x="82" y="14" width="7" height="1"/></g>
<polygon points="123.9,31.7 225,57.4 225,74 113.3,74" fill="#1d1d1d"/>
<polygon points="151,37.8 181,45.3 196,74 167.7,74" fill="#e32a2a"/>
<g fill="#c9b23a" transform="rotate(70 140 55)"><rect x="125" y="52" width="22" height="1"/><rect x="125" y="56" width="16" height="1"/></g>
</svg></div>
</div>
<div class="tc" style="left:264.5px;top:831px;width:224.8px;height:120px">
<div class="img"><svg width="224.5" height="169" viewBox="0 0 224.5 169"><rect width="224.5" height="169" fill="#b5b5b5"/>
<defs><linearGradient id="ag" x1="0" y1="0" x2="1" y2="0.7"><stop offset="0" stop-color="#8e8e8e"/><stop offset="0.45" stop-color="#b4b4b4"/><stop offset="0.68" stop-color="#d8d8d8"/><stop offset="0.85" stop-color="#e4e4e4"/><stop offset="1" stop-color="#d2d2d2"/></linearGradient></defs>
<rect width="224.5" height="169" fill="url(#ag)"/>
<rect x="30.5" y="39.3" width="75" height="40" fill="#2a2a2a"/>
<rect x="32" y="40.8" width="72" height="40" fill="#f0f0ee"/>
<path d="M72 44 Q78 42 80 50 Q80 60 72 58Z" fill="#24547e"/><path d="M84 44 Q90 44 88 56 L82 56Z" fill="#3a3a3a"/>
<g fill="#555"><rect x="38" y="48" width="16" height="1.5"/><rect x="38" y="52" width="16" height="1.5"/><rect x="38" y="56" width="14" height="1.5"/></g>
<rect x="70" y="62" width="12" height="3" fill="#e8b0b0" opacity="0.6"/>
<rect x="118" y="39.3" width="74.5" height="40" fill="#2a2a2a"/>
<rect x="119.5" y="40.8" width="71.5" height="40" fill="#f2f2f0"/>
<path d="M140 41 Q150 48 170 42Z" fill="#9ec8d8"/><path d="M182 42 L188 42 L186 56 L180 54Z" fill="#8cc0cc"/>
<ellipse cx="131" cy="64" rx="5" ry="3.5" fill="#8a9cb0" transform="rotate(30 131 64)"/>
<g fill="#444"><rect x="148" y="52" width="22" height="2"/><rect x="150" y="56" width="20" height="1.2"/><rect x="144" y="60" width="30" height="0.8"/></g>
<g fill="#222"><rect x="120" y="42" width="3" height="3"/><rect x="125" y="43" width="2" height="2"/><rect x="123" y="49" width="2.5" height="2.5"/></g>
</svg></div>
</div>
<div class="tc" style="left:504px;top:831px;width:224.8px;height:120px">
<div class="img"><svg width="224.5" height="169" viewBox="0 0 224.5 169"><rect width="224.5" height="169" fill="#f2b8c9"/>
<defs>
<linearGradient id="pk" x1="0" y1="0" x2="0" y2="1"><stop offset="0" stop-color="#f4a070"/><stop offset="1" stop-color="#e8407a"/></linearGradient>
<linearGradient id="pu" x1="0" y1="0" x2="0" y2="1"><stop offset="0" stop-color="#c070b0"/><stop offset="1" stop-color="#6070c0"/></linearGradient>
</defs>
<rect width="224.5" height="169" fill="#f2b8c9"/>
<rect x="0" y="6.7" width="153" height="162" fill="#0d0d0d"/>
<g fill="#e8487e">
<rect x="44" y="6.7" width="2.2" height="70"/><rect x="51" y="6.7" width="2.2" height="70"/><rect x="58" y="6.7" width="2.2" height="70"/><rect x="65" y="6.7" width="2.2" height="70"/>
<rect x="25" y="28" width="2.2" height="50"/><rect x="32" y="28" width="2.2" height="50"/><rect x="38" y="28" width="2.2" height="50"/>
<rect x="70" y="55" width="2.2" height="30"/><rect x="76" y="50" width="2.2" height="30"/><rect x="120" y="6.7" width="2.2" height="50"/><rect x="127" y="6.7" width="2.2" height="60"/><rect x="134" y="6.7" width="2.2" height="70"/><rect x="140" y="6.7" width="2.2" height="70"/>
</g>
<g fill="#90d070"><rect x="12" y="28" width="2.2" height="50"/><rect x="19" y="28" width="2.2" height="50"/><rect x="102" y="55" width="2.2" height="30"/></g>
<rect x="5" y="22" width="2.2" height="60" fill="#e8705a"/>
<rect x="0" y="26" width="2.2" height="60" fill="#7070c0"/>
<rect x="146" y="6.7" width="2.2" height="70" fill="#6080d0"/>
<circle cx="107.5" cy="39.4" r="29" fill="none" stroke="url(#pk)" stroke-width="1.6"/>
<circle cx="110" cy="21" r="6" fill="url(#pu)"/>
<circle cx="94" cy="46" r="10" fill="url(#pu)"/>
<polygon points="121,35 145,80 99,80" fill="url(#pk)"/>
<text x="14" y="80" font-size="16" fill="#fafafa" font-family="Liberation Sans" font-weight="bold">GEO</text>
<rect x="160.5" y="31.8" width="63.5" height="42.2" fill="#0d0d0d"/>
<g fill="#c83a70"><rect x="164" y="38" width="1.2" height="36"/><rect x="168" y="38" width="1.2" height="36"/><rect x="172" y="38" width="1.2" height="36"/><rect x="176" y="38" width="1.2" height="36"/><rect x="180" y="38" width="1.2" height="36"/><rect x="184" y="38" width="1.2" height="36"/><rect x="216" y="38" width="1.2" height="36"/><rect x="220" y="38" width="1.2" height="36"/></g>
<circle cx="203" cy="53" r="14" fill="none" stroke="url(#pk)" stroke-width="1"/>
<circle cx="198" cy="56" r="4.5" fill="url(#pu)"/><circle cx="205" cy="41" r="2.5" fill="url(#pu)"/>
<polygon points="209,48 222,70 196,70" fill="url(#pk)"/>
<text x="166" y="68" font-size="5" fill="#fafafa" font-family="Liberation Sans" font-weight="bold">GEO</text>
<text x="174" y="74" font-size="5" fill="#fafafa" font-family="Liberation Sans" font-weight="bold">METRIC</text>
</svg></div>
</div>
<div class="tc" style="left:743.5px;top:831px;width:224.8px;height:120px">
<div class="img"><svg width="224.5" height="169" viewBox="0 0 224.5 169"><rect width="224.5" height="169" fill="#ededed"/>
<defs><linearGradient id="as" x1="0" y1="0" x2="0.3" y2="1"><stop offset="0" stop-color="#6c4cb0"/><stop offset="1" stop-color="#3c6ad2"/></linearGradient></defs>
<rect width="224.5" height="169" fill="#ededed"/>
<rect x="58.7" y="11.5" width="110.5" height="157.5" fill="#fdfdfd"/>
<polygon points="123.8,11.5 169.2,11.5 169.2,169 58.7,169 58.7,130" fill="url(#as)"/>
<path d="M110 74 Q140 56 169.2 60 V74Z" fill="#3b3f5a"/>
<path d="M110 74 Q140 56 169.2 60" fill="none" stroke="#5a9ae8" stroke-width="1.2"/>
<g fill="#6a50b2" font-family="Liberation Sans" font-weight="bold"><text x="62" y="32" font-size="10.5" textLength="32">ASTRO</text><text x="62" y="45" font-size="12.5" textLength="34">FUNK</text><text x="62" y="54" font-size="6" textLength="30">ALL-STARS</text></g>
<rect x="62" y="14" width="2" height="2" fill="#444"/><rect x="66" y="15" width="20" height="0.6" fill="#aaa"/>
<g fill="#555"><rect x="62" y="67" width="20" height="0.8"/><rect x="62" y="70" width="10" height="1"/></g>
</svg></div>
</div>
<div class="a" style="left:0;top:905px;width:1222px;height:71px;background:#252525"></div>
<div class="a" style="left:1222px;top:905px;width:12px;height:71px;background:#242424"></div>
<div class="a" style="left:25px;top:912px;width:1183px;height:56.5px;background:#323232"></div>
<svg class="a" style="left:429px;top:933px" width="20" height="19" viewBox="0 0 20 19"><circle cx="8" cy="8" r="5.6" fill="none" stroke="#e8e8e8" stroke-width="2"/><path d="M12 12L17.5 17" stroke="#e8e8e8" stroke-width="2.2" stroke-linecap="round"/></svg>
<div class="a" style="left:455px;top:955px;width:268px;height:1.2px;background:#484848"></div>
<div class="a" style="left:733.8px;top:925.4px;width:70.2px;height:30.8px;border:2px solid #c4c4c4;border-radius:16px"></div>
<div class="a" style="left:1362.3px;top:925px;width:71.5px;height:31.6px;background:#1473e6;border-radius:16px"></div>
<div class="a" style="left:1449.6px;top:925.5px;width:70.9px;height:31px;border:2px solid #d6d6d6;border-radius:16px"></div>
<div class="a" style="left:1256px;top:148.5px;width:263px;height:1.5px;background:#454545"></div>
<div class="in" style="left:1256px;top:180.3px;width:84.6px;height:30px"></div>
<div class="dd" style="left:1353.6px;top:180.6px;width:166.4px;height:31px"></div>
<svg class="a" style="left:1497px;top:191.5px" width="12" height="8" viewBox="0 0 12 8"><path d="M1.3 1.5L6 6.2L10.7 1.5" fill="none" stroke="#e0e0e0" stroke-width="1.7"/></svg>
<div class="in" style="left:1256px;top:243px;width:84.6px;height:29.5px"></div>
<svg class="a" style="left:1353px;top:244.5px" width="24" height="27" viewBox="0 0 24 27"><rect x="0.9" y="0.9" width="22" height="25" fill="#27374d" stroke="#3b7fd9" stroke-width="1.6"/><circle cx="11.9" cy="6.6" r="3" fill="#3f8ef3"/><path d="M6 25.6V14.6Q6 11 9.5 11H14.4Q18 11 18 14.6V25.6Z" fill="#3f8ef3"/></svg>
<svg class="a" style="left:1383px;top:246.5px" width="27" height="22" viewBox="0 0 27 22"><rect x="0.9" y="0.9" width="25" height="20" fill="#262626" stroke="#cdcdcd" stroke-width="1.6"/><circle cx="13.5" cy="6.8" r="2.9" fill="#cdcdcd"/><path d="M7 21V14.4Q7 11.4 10.2 11.4H16.8Q20 11.4 20 14.4V21Z" fill="#cdcdcd"/></svg>
<div class="in" style="left:1423px;top:243px;width:97px;height:29px"></div>
<div class="a" style="left:1423px;top:243px;width:20px;height:29px;background:#3a3a3a;border-radius:3px 0 0 3px"></div>
<svg class="a" style="left:1427px;top:247px" width="12" height="21" viewBox="0 0 12 21"><path d="M2.2 6.2L6 2.6L9.8 6.2" fill="none" stroke="#d0d0d0" stroke-width="1.5"/><path d="M2.2 13.5L6 17L9.8 13.5" fill="none" stroke="#5a5a5a" stroke-width="1.5"/></svg>
<div class="in" style="left:1254.8px;top:326.4px;width:86.6px;height:31.4px;border:1.6px solid #3e6aa8;background:#202020"></div>
<div class="a" style="left:1256.3999999999999px;top:328.0px;width:18.5px;height:28.2px;background:#2b2e33"></div>
<div class="a" style="left:1274.6px;top:328.0px;width:1.4px;height:28.2px;background:#3e6aa8"></div>
<svg class="a" style="left:1259.0px;top:331.09999999999997px" width="12" height="22" viewBox="0 0 12 22"><path d="M2.4 7L6 3.6L9.6 7" fill="none" stroke="#c8c8c8" stroke-width="1.4"/><path d="M2.4 14.5L6 18L9.6 14.5" fill="none" stroke="#c8c8c8" stroke-width="1.4"/></svg>
<div class="in" style="left:1353.2px;top:327.2px;width:85.8px;height:29.3px;background:#1f1f1f;border-color:#363636"></div>
<div class="a" style="left:1354.2px;top:328.2px;width:19.5px;height:27.3px;background:#2d2d2d"></div>
<svg class="a" style="left:1357.4px;top:330.84999999999997px" width="12" height="22" viewBox="0 0 12 22"><path d="M2.4 7L6 3.6L9.6 7" fill="none" stroke="#c8c8c8" stroke-width="1.4"/><path d="M2.4 14.5L6 18L9.6 14.5" fill="none" stroke="#c8c8c8" stroke-width="1.4"/></svg>
<div class="in" style="left:1254.8px;top:383.4px;width:86.6px;height:29.2px;background:#1f1f1f;border-color:#363636"></div>
<div class="a" style="left:1255.8px;top:384.4px;width:19.5px;height:27.2px;background:#2d2d2d"></div>
<svg class="a" style="left:1259.0px;top:387.0px" width="12" height="22" viewBox="0 0 12 22"><path d="M2.4 7L6 3.6L9.6 7" fill="none" stroke="#c8c8c8" stroke-width="1.4"/><path d="M2.4 14.5L6 18L9.6 14.5" fill="none" stroke="#c8c8c8" stroke-width="1.4"/></svg>
<div class="in" style="left:1353.2px;top:383.4px;width:85.8px;height:29.2px;background:#1f1f1f;border-color:#363636"></div>
<div class="a" style="left:1354.2px;top:384.4px;width:19.5px;height:27.2px;background:#2d2d2d"></div>
<svg class="a" style="left:1357.4px;top:387.0px" width="12" height="22" viewBox="0 0 12 22"><path d="M2.4 7L6 3.6L9.6 7" fill="none" stroke="#c8c8c8" stroke-width="1.4"/><path d="M2.4 14.5L6 18L9.6 14.5" fill="none" stroke="#c8c8c8" stroke-width="1.4"/></svg>
<div class="a" style="left:1295.4px;top:334px;width:1px;height:15px;background:#d8d8d8"></div>
<div class="a" style="left:1454px;top:354px;width:31px;height:31.5px;background:#3b3b3b;border-radius:4px;border:1px solid #404040"></div>
<svg class="a" style="left:1459.5px;top:360px" width="20" height="20" viewBox="0 0 20 20"><g transform="rotate(-45 10 10)" fill="none" stroke="#d8d8d8" stroke-width="1.6"><rect x="1.8" y="7" width="9.6" height="6" rx="3"/><rect x="8.6" y="7" width="9.6" height="6" rx="3"/></g></svg>
<svg class="a" style="left:1254px;top:426px" width="13" height="10" viewBox="0 0 13 10"><path d="M2 3L6.5 7.5L11 3" fill="none" stroke="#c8c8c8" stroke-width="1.6"/></svg>
<div class="dd" style="left:1255px;top:465.5px;width:233.6px;height:30.1px"></div>
<svg class="a" style="left:1465.2px;top:476.05px" width="12" height="8" viewBox="0 0 12 8"><path d="M1.3 1.5L6 6.2L10.7 1.5" fill="none" stroke="#e0e0e0" stroke-width="1.7"/></svg>
<div class="dd" style="left:1255px;top:525.7px;width:233.6px;height:30.3px"></div>
<svg class="a" style="left:1465.2px;top:536.35px" width="12" height="8" viewBox="0 0 12 8"><path d="M1.3 1.5L6 6.2L10.7 1.5" fill="none" stroke="#e0e0e0" stroke-width="1.7"/></svg>
<div class="dd" style="left:1255px;top:585.2px;width:233.6px;height:31px"></div>
<svg class="a" style="left:1465.2px;top:596.2px" width="12" height="8" viewBox="0 0 12 8"><path d="M1.3 1.5L6 6.2L10.7 1.5" fill="none" stroke="#e0e0e0" stroke-width="1.7"/></svg>
<div class="dd" style="left:1255px;top:632.8px;width:110.4px;height:30.6px"></div>
<div class="t" style="left:6.84px;top:7.14px;font-size:12.35px;transform:scaleX(0.9613);color:#1b1b1b;font-weight:400;-webkit-text-stroke:0px #1b1b1b">New Document</div><div class="t" style="left:46.81px;top:43.86px;font-size:15.41px;transform:scaleX(0.7878);color:#b3b3b3;font-weight:400;-webkit-text-stroke:0.3px #b3b3b3">Recent</div><div class="t" style="left:109.00px;top:43.86px;font-size:15.41px;transform:scaleX(0.7846);color:#b3b3b3;font-weight:400;-webkit-text-stroke:0.3px #b3b3b3">Saved</div><div class="t" style="left:167.13px;top:43.86px;font-size:15.41px;transform:scaleX(0.8680);color:#b3b3b3;font-weight:400;-webkit-text-stroke:0.3px #b3b3b3">Mobile</div><div class="t" style="left:230.70px;top:43.86px;font-size:15.41px;transform:scaleX(0.8180);color:#b3b3b3;font-weight:400;-webkit-text-stroke:0.3px #b3b3b3">Web</div><div class="t" style="left:279.14px;top:43.86px;font-size:15.41px;transform:scaleX(0.8607);color:#f0f0f0;font-weight:400;-webkit-text-stroke:0.3px #f0f0f0">Print</div><div class="t" style="left:329.85px;top:43.86px;font-size:15.41px;transform:scaleX(0.8466);color:#b3b3b3;font-weight:400;-webkit-text-stroke:0.3px #b3b3b3">Film &amp; Video</div><div class="t" style="left:426.80px;top:43.86px;font-size:15.41px;transform:scaleX(0.8513);color:#b3b3b3;font-weight:400;-webkit-text-stroke:0.3px #b3b3b3">Art &amp; Illustration</div><div class="t" style="left:25.20px;top:96.16px;font-size:12.21px;transform:scaleX(0.8641);color:#d2d2d2;font-weight:700;-webkit-text-stroke:0.3px #d2d2d2">BLANK DOCUMENT PRESETS</div><div class="t" style="left:183.60px;top:96.17px;font-size:12.20px;transform:scaleX(0.9975);color:#a8a8a8;font-weight:400;-webkit-text-stroke:0.3px #a8a8a8">(8)</div><div class="t" style="left:25.10px;top:361.71px;font-size:11.92px;transform:scaleX(0.8657);color:#d2d2d2;font-weight:700;-webkit-text-stroke:0.3px #d2d2d2">TEMPLATES</div><div class="t" style="left:92.90px;top:361.73px;font-size:11.90px;transform:scaleX(0.9488);color:#a8a8a8;font-weight:400;-webkit-text-stroke:0.3px #a8a8a8">(37)</div><div class="t" style="left:571.00px;top:316.57px;font-size:14.68px;transform:scaleX(0.8317);color:#c6c6c6;font-weight:700;-webkit-text-stroke:0.3px #c6c6c6">View All Presets +</div><div class="t" style="left:123.20px;top:239.63px;font-size:11.77px;transform:scaleX(0.8457);color:#ebebeb;font-weight:700;-webkit-text-stroke:0.3px #ebebeb">Letter</div><div class="t" style="left:96.85px;top:257.23px;font-size:11.77px;transform:scaleX(0.8551);color:#c4c4c4;font-weight:400;-webkit-text-stroke:0.3px #c4c4c4">215.9 x 279.4 mm</div><div class="t" style="left:370.55px;top:239.63px;font-size:11.77px;transform:scaleX(0.8066);color:#ebebeb;font-weight:700;-webkit-text-stroke:0.3px #ebebeb">A4</div><div class="t" style="left:343.80px;top:257.23px;font-size:11.77px;transform:scaleX(0.8829);color:#c4c4c4;font-weight:400;-webkit-text-stroke:0.3px #c4c4c4">210 x 297 mm</div><div class="t" style="left:589.80px;top:239.63px;font-size:11.77px;transform:scaleX(0.8416);color:#ebebeb;font-weight:700;-webkit-text-stroke:0.3px #ebebeb">Print-Large</div><div class="t" style="left:571.90px;top:257.23px;font-size:11.77px;transform:scaleX(0.9114);color:#c4c4c4;font-weight:400;-webkit-text-stroke:0.3px #c4c4c4">6705.6 x 3048 mm</div><div class="t" style="left:842.95px;top:239.63px;font-size:11.77px;transform:scaleX(0.8568);color:#ebebeb;font-weight:700;-webkit-text-stroke:0.3px #ebebeb">Legal</div><div class="t" style="left:815.00px;top:257.23px;font-size:11.77px;transform:scaleX(0.8689);color:#c4c4c4;font-weight:400;-webkit-text-stroke:0.3px #c4c4c4">215.9 x 355.6 mm</div><div class="t" style="left:37.01px;top:573.09px;font-size:12.06px;transform:scaleX(0.8890);color:#dedede;font-weight:400;-webkit-text-stroke:0.3px #dedede">International Women’s Day Peac...</div><div class="t" style="left:213.00px;top:573.09px;font-size:12.06px;transform:scaleX(0.7572);color:#adadad;font-weight:400;-webkit-text-stroke:0.3px #adadad">FREE</div><div class="t" style="left:276.90px;top:573.09px;font-size:12.06px;transform:scaleX(0.8946);color:#dedede;font-weight:400;-webkit-text-stroke:0.3px #dedede">Surreal Activity Book</div><div class="t" style="left:452.50px;top:573.09px;font-size:12.06px;transform:scaleX(0.7572);color:#adadad;font-weight:400;-webkit-text-stroke:0.3px #adadad">FREE</div><div class="t" style="left:517.20px;top:573.09px;font-size:12.06px;transform:scaleX(0.8946);color:#dedede;font-weight:400;-webkit-text-stroke:0.3px #dedede">Concepting Moodboard Set</div><div class="t" style="left:692.00px;top:573.09px;font-size:12.06px;transform:scaleX(0.7572);color:#adadad;font-weight:400;-webkit-text-stroke:0.3px #adadad">FREE</div><div class="t" style="left:756.90px;top:573.09px;font-size:12.06px;transform:scaleX(0.8868);color:#dedede;font-weight:400;-webkit-text-stroke:0.3px #dedede">Curved Type Brochure Layout</div><div class="t" style="left:931.50px;top:573.09px;font-size:12.06px;transform:scaleX(0.7572);color:#adadad;font-weight:400;-webkit-text-stroke:0.3px #adadad">FREE</div><div class="t" style="left:37.80px;top:793.09px;font-size:12.06px;transform:scaleX(0.9011);color:#dedede;font-weight:400;-webkit-text-stroke:0.3px #dedede">Bold and Bright Trifold Brochure...</div><div class="t" style="left:213.00px;top:793.09px;font-size:12.06px;transform:scaleX(0.7572);color:#adadad;font-weight:400;-webkit-text-stroke:0.3px #adadad">FREE</div><div class="t" style="left:277.20px;top:793.09px;font-size:12.06px;transform:scaleX(0.9061);color:#dedede;font-weight:400;-webkit-text-stroke:0.3px #dedede">Modern Mystery Event Brochure...</div><div class="t" style="left:452.50px;top:793.09px;font-size:12.06px;transform:scaleX(0.7572);color:#adadad;font-weight:400;-webkit-text-stroke:0.3px #adadad">FREE</div><div class="t" style="left:517.20px;top:793.09px;font-size:12.06px;transform:scaleX(0.9132);color:#dedede;font-weight:400;-webkit-text-stroke:0.3px #dedede">Brochure with Instructions</div><div class="t" style="left:692.00px;top:793.09px;font-size:12.06px;transform:scaleX(0.7572);color:#adadad;font-weight:400;-webkit-text-stroke:0.3px #adadad">FREE</div><div class="t" style="left:756.90px;top:793.09px;font-size:12.06px;transform:scaleX(0.8690);color:#dedede;font-weight:400;-webkit-text-stroke:0.3px #dedede">Triangles Business Brochure</div><div class="t" style="left:931.50px;top:793.09px;font-size:12.06px;transform:scaleX(0.7572);color:#adadad;font-weight:400;-webkit-text-stroke:0.3px #adadad">FREE</div><div class="t" style="left:1254.40px;top:95.23px;font-size:11.19px;transform:scaleX(0.8605);color:#c2c2c2;font-weight:400;-webkit-text-stroke:0.3px #c2c2c2">PRESET DETAILS</div><div class="t" style="left:1260.32px;top:125.19px;font-size:13.95px;transform:scaleX(0.9797);color:#e6e6e6;font-weight:400;-webkit-text-stroke:0.05px #e6e6e6">Untitled-1</div><div class="t" style="left:1254.40px;top:162.62px;font-size:10.61px;transform:scaleX(1.0397);color:#bdbdbd;font-weight:400;-webkit-text-stroke:0.3px #bdbdbd">Width</div><div class="t" style="left:1264.00px;top:188.07px;font-size:14.10px;transform:scaleX(0.9715);color:#e6e6e6;font-weight:400;-webkit-text-stroke:0.05px #e6e6e6">210 mm</div><div class="t" style="left:1364.47px;top:188.70px;font-size:14.53px;transform:scaleX(0.9340);color:#e6e6e6;font-weight:400;-webkit-text-stroke:0.3px #e6e6e6">Millimeters</div><div class="t" style="left:1254.30px;top:223.83px;font-size:11.77px;transform:scaleX(0.9067);color:#bdbdbd;font-weight:400;-webkit-text-stroke:0.3px #bdbdbd">Height</div><div class="t" style="left:1352.40px;top:223.83px;font-size:11.77px;transform:scaleX(0.9542);color:#bdbdbd;font-weight:400;-webkit-text-stroke:0.3px #bdbdbd">Orientation</div><div class="t" style="left:1421.60px;top:223.83px;font-size:11.77px;transform:scaleX(0.9447);color:#bdbdbd;font-weight:400;-webkit-text-stroke:0.3px #bdbdbd">Artboards</div><div class="t" style="left:1264.00px;top:249.57px;font-size:14.10px;transform:scaleX(0.9715);color:#e6e6e6;font-weight:400;-webkit-text-stroke:0.05px #e6e6e6">297 mm</div><div class="t" style="left:1451.00px;top:249.65px;font-size:14.00px;transform:scaleX(1.0000);color:#e6e6e6;font-weight:400;-webkit-text-stroke:0.05px #e6e6e6">1</div><div class="t" style="left:1254.40px;top:283.03px;font-size:11.77px;transform:scaleX(0.8934);color:#bdbdbd;font-weight:400;-webkit-text-stroke:0.3px #bdbdbd">Bleed</div><div class="t" style="left:1254.40px;top:308.04px;font-size:12.35px;transform:scaleX(0.8285);color:#bdbdbd;font-weight:400;-webkit-text-stroke:0.3px #bdbdbd">Top</div><div class="t" style="left:1351.76px;top:308.04px;font-size:12.35px;transform:scaleX(0.9386);color:#bdbdbd;font-weight:400;-webkit-text-stroke:0.3px #bdbdbd">Bottom</div><div class="t" style="left:1283.20px;top:334.93px;font-size:13.08px;transform:scaleX(1.0183);color:#e6e6e6;font-weight:400;-webkit-text-stroke:0.05px #e6e6e6">3 mm</div><div class="t" style="left:1382.50px;top:334.93px;font-size:13.08px;transform:scaleX(0.9939);color:#e6e6e6;font-weight:400;-webkit-text-stroke:0.05px #e6e6e6">3 mm</div><div class="t" style="left:1254.40px;top:364.43px;font-size:11.77px;transform:scaleX(0.8597);color:#bdbdbd;font-weight:400;-webkit-text-stroke:0.3px #bdbdbd">Left</div><div class="t" style="left:1352.70px;top:364.43px;font-size:11.77px;transform:scaleX(0.8831);color:#bdbdbd;font-weight:400;-webkit-text-stroke:0.3px #bdbdbd">Right</div><div class="t" style="left:1283.20px;top:390.84px;font-size:14.24px;transform:scaleX(0.9617);color:#e6e6e6;font-weight:400;-webkit-text-stroke:0.05px #e6e6e6">3 mm</div><div class="t" style="left:1382.50px;top:390.84px;font-size:14.24px;transform:scaleX(0.9387);color:#e6e6e6;font-weight:400;-webkit-text-stroke:0.05px #e6e6e6">3 mm</div><div class="t" style="left:1269.00px;top:425.33px;font-size:11.77px;transform:scaleX(0.9141);color:#bdbdbd;font-weight:400;-webkit-text-stroke:0.3px #bdbdbd">Advanced Options</div><div class="t" style="left:1254.00px;top:447.33px;font-size:11.77px;transform:scaleX(0.9156);color:#bdbdbd;font-weight:400;-webkit-text-stroke:0.3px #bdbdbd">Color Mode</div><div class="t" style="left:1267.00px;top:474.54px;font-size:14.24px;transform:scaleX(0.8405);color:#e6e6e6;font-weight:400;-webkit-text-stroke:0.3px #e6e6e6">CMYK Color</div><div class="t" style="left:1254.40px;top:507.60px;font-size:11.34px;transform:scaleX(0.8952);color:#bdbdbd;font-weight:400;-webkit-text-stroke:0.3px #bdbdbd">Raster Effects</div><div class="t" style="left:1266.08px;top:533.14px;font-size:14.24px;transform:scaleX(0.9182);color:#e6e6e6;font-weight:400;-webkit-text-stroke:0.3px #e6e6e6">High (300 ppi)</div><div class="t" style="left:1254.40px;top:566.70px;font-size:11.34px;transform:scaleX(0.9570);color:#bdbdbd;font-weight:400;-webkit-text-stroke:0.3px #bdbdbd">Preview Mode</div><div class="t" style="left:1266.09px;top:593.54px;font-size:14.24px;transform:scaleX(0.9129);color:#e6e6e6;font-weight:400;-webkit-text-stroke:0.3px #e6e6e6">Default</div><div class="t" style="left:1266.02px;top:641.04px;font-size:14.24px;transform:scaleX(0.9758);color:#e0e0e0;font-weight:400;-webkit-text-stroke:0.3px #e0e0e0">More Settings</div><div class="t" style="left:460.02px;top:932.27px;font-size:14.10px;transform:scaleX(0.9834);color:#525252;font-weight:400;-webkit-text-stroke:0.05px #525252">Find more templates on Adobe Stock</div><div class="t" style="left:760.60px;top:934.42px;font-size:12.50px;transform:scaleX(0.9423);color:#dcdcdc;font-weight:700;-webkit-text-stroke:0.3px #dcdcdc">Go</div><div class="t" style="left:1379.30px;top:932.72px;font-size:14.39px;transform:scaleX(0.8245);color:#ffffff;font-weight:700;-webkit-text-stroke:0.3px #ffffff">Create</div><div class="t" style="left:1469.00px;top:932.72px;font-size:14.39px;transform:scaleX(0.7918);color:#e2e2e2;font-weight:700;-webkit-text-stroke:0.3px #e2e2e2">Close</div>
</body></html>
